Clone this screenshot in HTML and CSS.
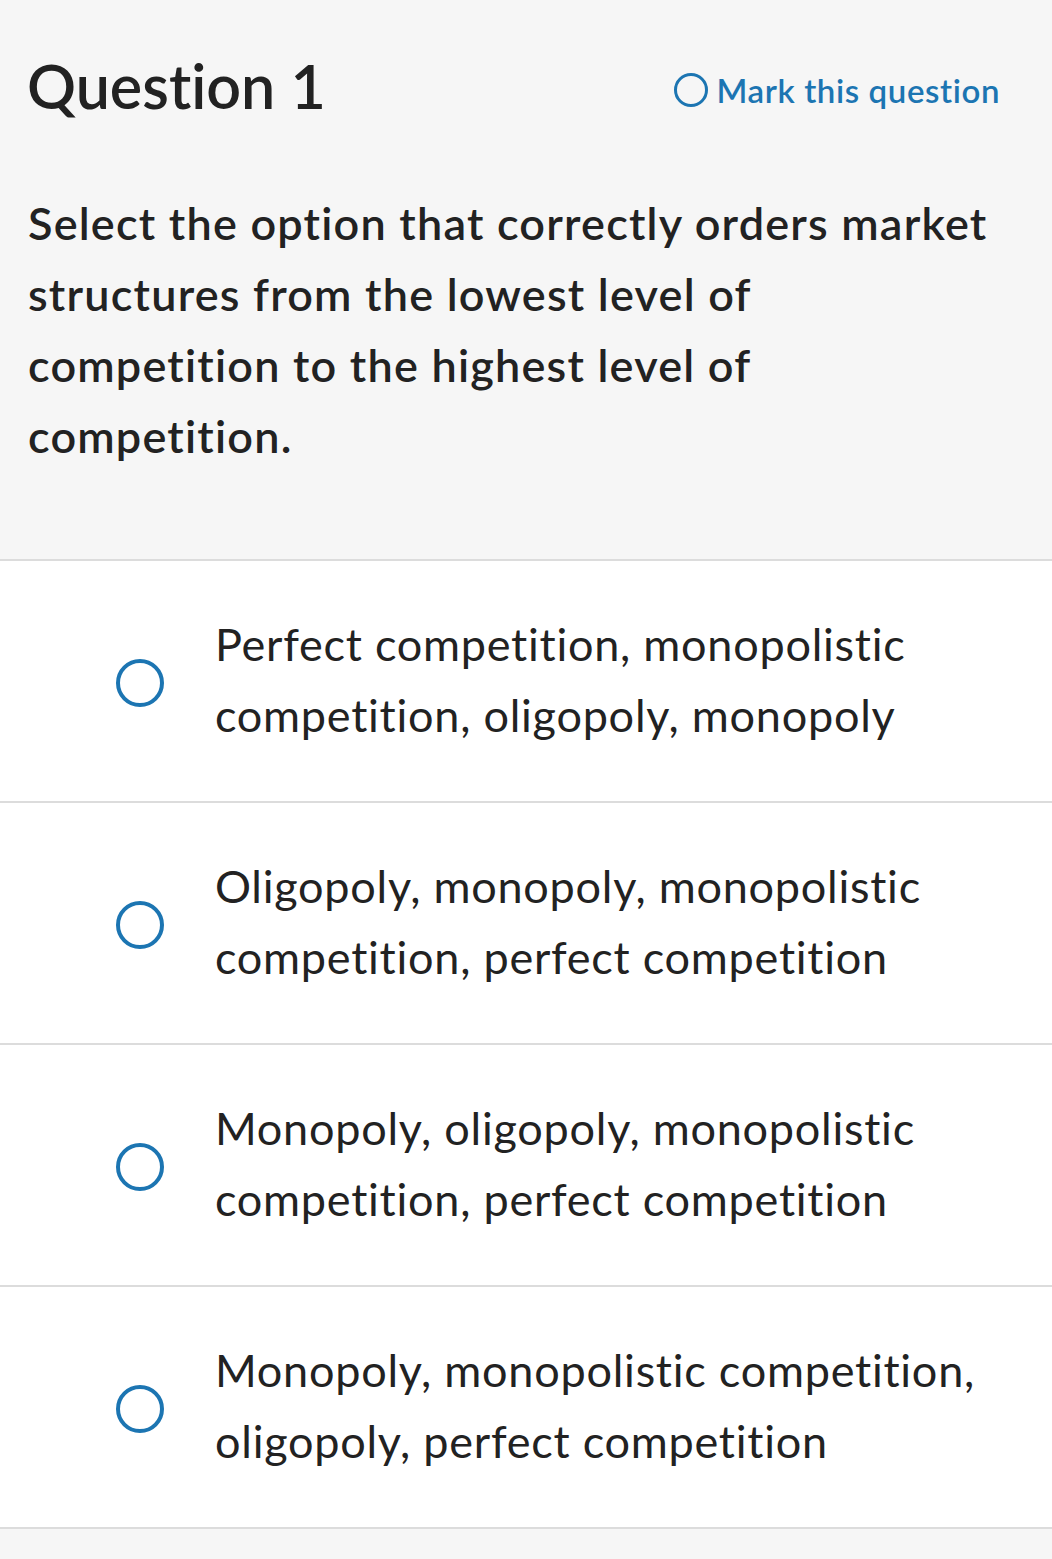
FILE: index.html
```html
<!DOCTYPE html>
<html lang="en">
<head>
  <meta charset="UTF-8">
  <meta name="viewport" content="width=device-width, initial-scale=1.0">
  <title>Question 1</title>
  <link rel="stylesheet" href="styles.css">
</head>
<body>

<div id="quiz">
  <div class="question">
    <div class="question-head">
      <h1>Question 1</h1>
      <button class="mark">
        <span class="mark-ring"></span>
        Mark this question
      </button>
    </div>
    <p class="prompt">Select the option that correctly orders market structures from the lowest level of competition to the highest level of competition.</p>
  </div>

  <ul class="options">
    <li class="option">
      <span class="radio"></span>
      <span class="label">Perfect competition, monopolistic competition, oligopoly, monopoly</span>
    </li>
    <li class="option">
      <span class="radio"></span>
      <span class="label">Oligopoly, monopoly, monopolistic competition, perfect competition</span>
    </li>
    <li class="option">
      <span class="radio"></span>
      <span class="label">Monopoly, oligopoly, monopolistic competition, perfect competition</span>
    </li>
    <li class="option">
      <span class="radio"></span>
      <span class="label">Monopoly, monopolistic competition, oligopoly, perfect competition</span>
    </li>
  </ul>
</div>

</body>
</html>
```

FILE: styles.css
```css
body {
  font-family: 'Lato', 'Open Sans', sans-serif;
  font-variant-ligatures: none;
  background-color: #f6f6f6;
  color: #222;
  margin: 0;
}

#quiz {
  width: 1052px;
}

.question {
  height: 561px;
  box-sizing: border-box;
  padding: 48px 28px 0 27px;
  border-bottom: 2px solid #dcdcdc;
}

.question-head {
  display: flex;
  justify-content: space-between;
  align-items: center;
  padding-right: 24px;
}

.question-head h1 {
  margin: 0;
  font-size: 61px;
  font-weight: 600;
  line-height: 76px;
}

.mark {
  display: flex;
  align-items: center;
  gap: 9px;
  background: none;
  border: none;
  padding: 0;
  margin-top: 7px;
  font-family: inherit;
  font-variant-ligatures: none;
  font-size: 33px;
  font-weight: 600;
  letter-spacing: 0.6px;
  color: #1c75b2;
  cursor: pointer;
}

.mark-ring {
  width: 28px;
  height: 28px;
  border: 3px solid #1c75b2;
  border-radius: 50%;
}

.prompt {
  margin: 64px 0 0 1px;
  font-size: 45px;
  font-weight: 600;
  letter-spacing: 1.2px;
  line-height: 71px;
  padding-right: 16px;
}

.options {
  list-style: none;
  margin: 0;
  padding: 0;
  background-color: #fff;
}

.option {
  display: flex;
  align-items: center;
  height: 242px;
  box-sizing: border-box;
  padding: 4px 40px 0 116px;
  border-bottom: 2px solid #dcdcdc;
  cursor: pointer;
}

.radio {
  flex: none;
  width: 40px;
  height: 40px;
  border: 4px solid #1c75b2;
  border-radius: 50%;
  margin-right: 51px;
}

.label {
  font-size: 45px;
  letter-spacing: 0.75px;
  line-height: 71px;
  margin-top: -6px;
}
```
